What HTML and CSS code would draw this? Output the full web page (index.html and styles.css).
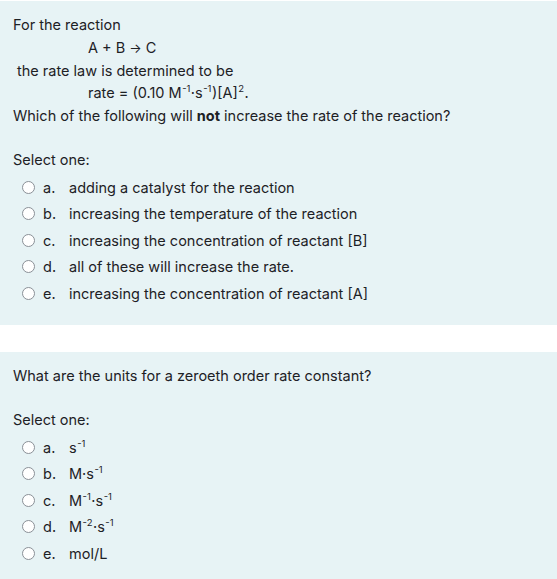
FILE: index.html
```html
<!DOCTYPE html>
<html lang="en">
<head>
<meta charset="utf-8">
<title>Quiz</title>
<link rel="stylesheet" href="styles.css">
</head>
<body>
<div class="page">
  <section class="que">
    <div class="qtext">
      <p class="line">For the reaction</p>
      <p class="line indent-l">A + B <span class="arrow">→</span> C</p>
      <p class="line indent-s">the rate law is determined to be</p>
      <p class="line indent-l">rate = (0.10 M<sup>-1</sup>·s<sup>-1</sup>)[A]<sup>2</sup>.</p>
      <p class="line">Which of the following will <strong>not</strong> increase the rate of the reaction?</p>
    </div>
    <div class="prompt">Select one:</div>
    <div class="answers">
      <div class="opt"><span class="radio"></span><span class="letter">a.</span><span class="atext">adding a catalyst for the reaction</span></div>
      <div class="opt"><span class="radio"></span><span class="letter">b.</span><span class="atext">increasing the temperature of the reaction</span></div>
      <div class="opt"><span class="radio"></span><span class="letter">c.</span><span class="atext">increasing the concentration of reactant [B]</span></div>
      <div class="opt"><span class="radio"></span><span class="letter">d.</span><span class="atext">all of these will increase the rate.</span></div>
      <div class="opt"><span class="radio"></span><span class="letter">e.</span><span class="atext">increasing the concentration of reactant [A]</span></div>
    </div>
  </section>
  <section class="que">
    <div class="qtext">
      <p class="line">What are the units for a zeroeth order rate constant?</p>
    </div>
    <div class="prompt">Select one:</div>
    <div class="answers">
      <div class="opt"><span class="radio"></span><span class="letter">a.</span><span class="atext">s<sup>-1</sup></span></div>
      <div class="opt"><span class="radio"></span><span class="letter">b.</span><span class="atext">M·s<sup>-1</sup></span></div>
      <div class="opt"><span class="radio"></span><span class="letter">c.</span><span class="atext">M<sup>-1</sup>·s<sup>-1</sup></span></div>
      <div class="opt"><span class="radio"></span><span class="letter">d.</span><span class="atext">M<sup>-2</sup>·s<sup>-1</sup></span></div>
      <div class="opt"><span class="radio"></span><span class="letter">e.</span><span class="atext">mol/L</span></div>
    </div>
  </section>
</div>
</body>
</html>
```

FILE: styles.css
```css
html, body {
  margin: 0;
  padding: 0;
  background: #ffffff;
}
body {
  font-family: "Inter", "Liberation Sans", sans-serif;
  font-size: 14.5px;
  color: #1d2125;
}
.page {
  display: flex;
  flex-direction: column;
  gap: 27px;
  padding-top: 1px;
  height: 578px;
  overflow: hidden;
}
.que {
  background: #e7f3f5;
  padding: 13px 13px 19px 13px;
  flex: none;
}
.qtext {
  margin-bottom: 20px;
}
.line {
  margin: 0;
  height: 22.75px;
  line-height: 22.75px;
  white-space: nowrap;
}
.indent-l { padding-left: 75px; }
.indent-s { padding-left: 4px; }
.arrow { font-size: 13px; line-height: 0; }
sup {
  font-size: 9.5px;
  line-height: 0;
  vertical-align: 6px;
  padding: 0 0.5px;
}
strong { font-weight: 700; }
.prompt {
  height: 23px;
  line-height: 23px;
}
.answers {
  margin-top: 3px;
  display: flex;
  flex-direction: column;
}
.opt {
  display: flex;
  align-items: center;
  height: 26.5px;
  line-height: 23px;
  white-space: nowrap;
}
.radio {
  flex: none;
  box-sizing: border-box;
  width: 13px;
  height: 13px;
  border: 1px solid #8a9097;
  border-radius: 50%;
  background: #ffffff;
  margin-left: 9px;
  margin-right: 8px;
}
.letter {
  flex: none;
  width: 26px;
}
```
